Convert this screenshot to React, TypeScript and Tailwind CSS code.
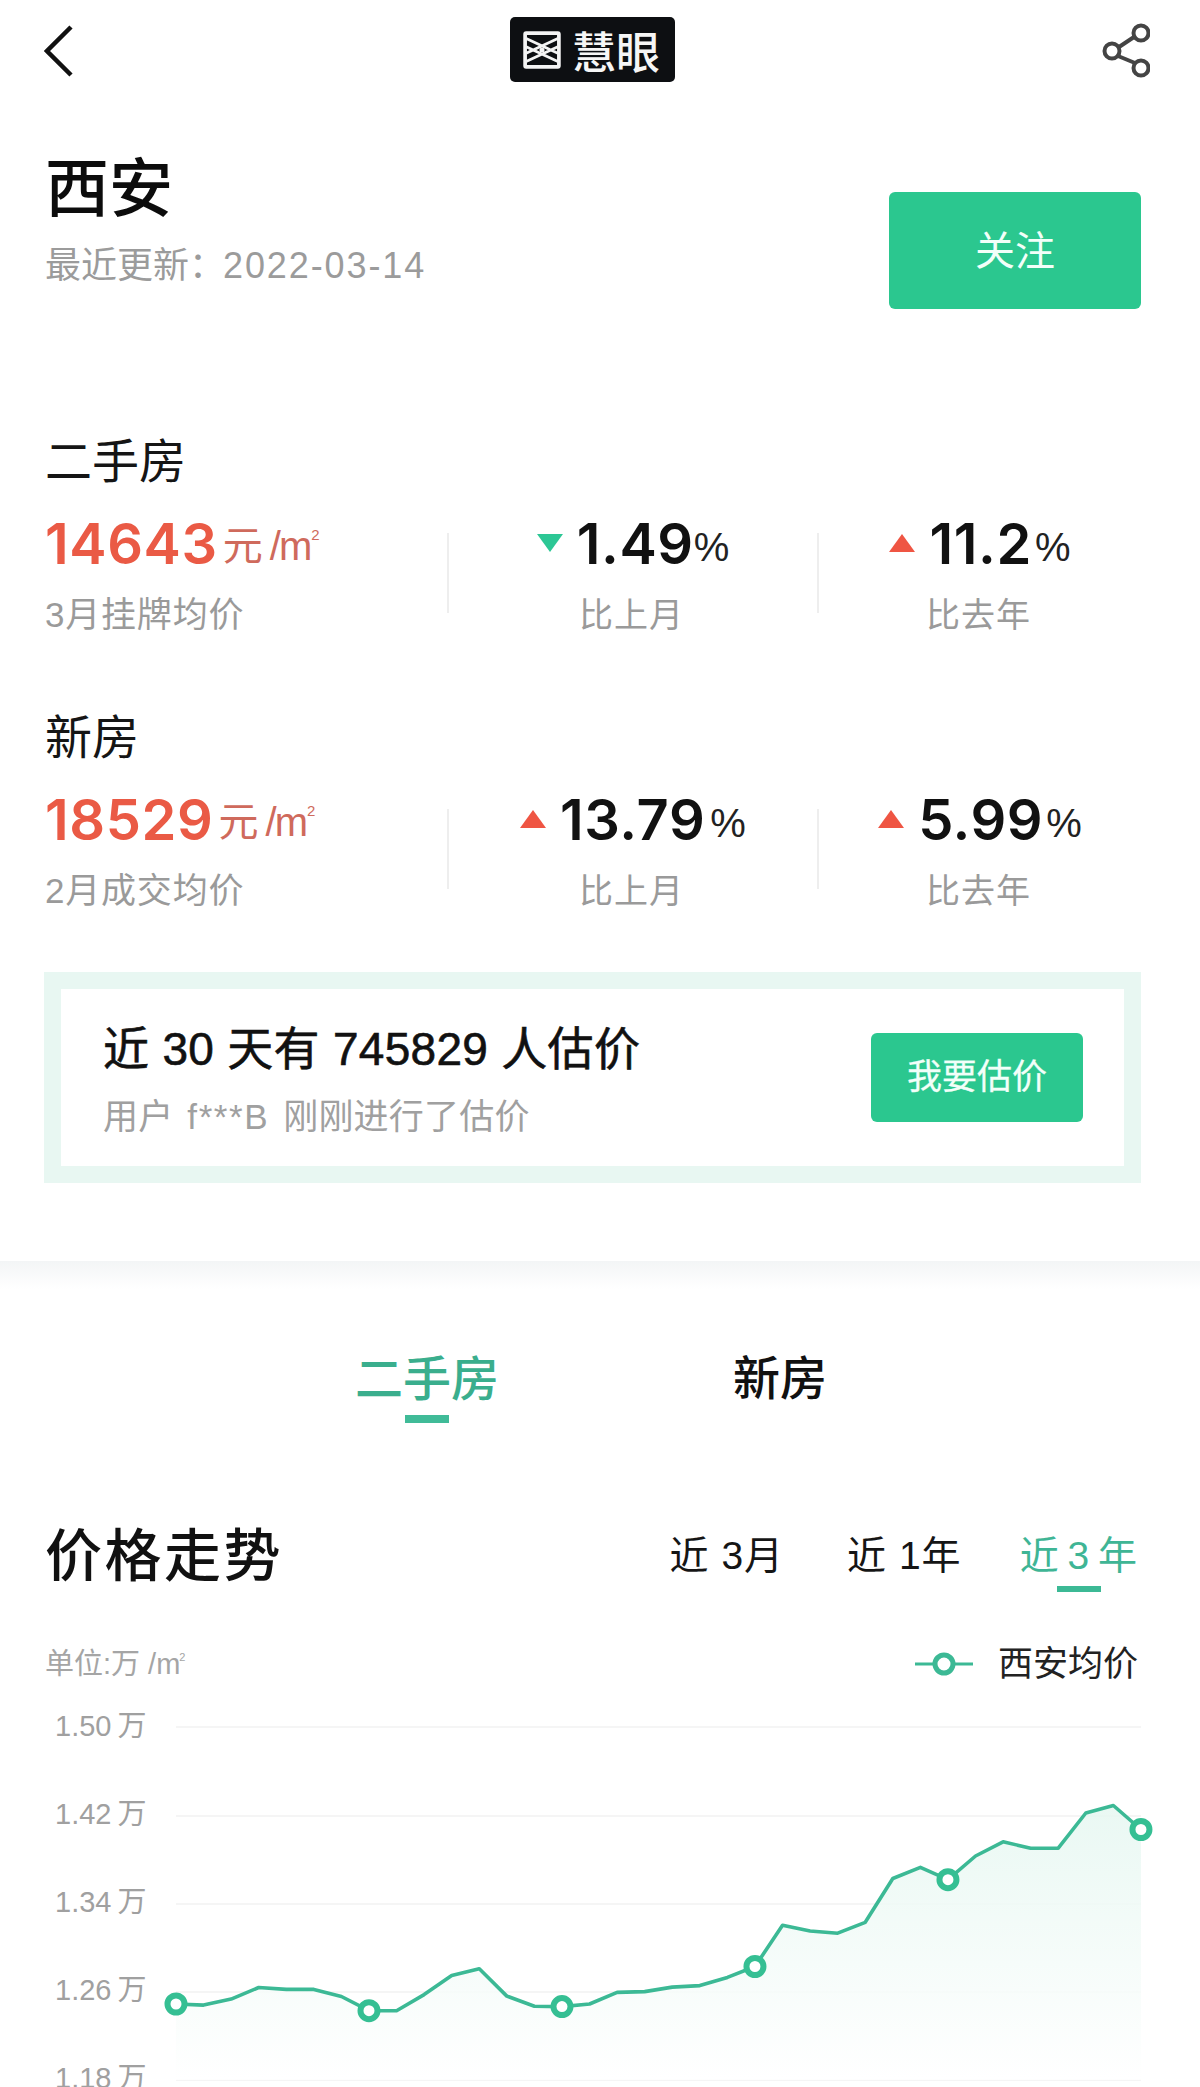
const sans = "font-['Liberation_Sans','Noto_Sans_CJK_SC',sans-serif]";
const cjk = "font-['Noto_Sans_CJK_SC',sans-serif]";
const num = "font-['Inter','Liberation_Sans',sans-serif]";

const trendY = [
  2003, 2004.1, 1998.1, 1986.5, 1988.4, 1988.4, 1995.5, 2009.7, 2009.7, 1993.6, 1974.5, 1967.8,
  1995.1, 2005.2, 2005.6, 2003, 1991.4, 1990.6, 1986.1, 1984.6, 1976.4, 1965.5, 1924.3, 1930,
  1932.2, 1921.3, 1877.5, 1866.3, 1878.7, 1855, 1840.8, 1847.2, 1847.2, 1812, 1804.5, 1828.5,
];
const trendPoints = trendY.map((y, i) => [176 + i * 27.57, y]);
const linePoints = trendPoints.map((p) => p.join(",")).join(" ");
const gridY = [1726, 1815, 1903, 1991, 2079];
const axisLabels = ["1.50", "1.42", "1.34", "1.26", "1.18"];

function Triangle({ up }: { up: boolean }) {
  return (
    <svg width="26" height="18" viewBox="0 0 26 18" className="mt-[20px] shrink-0">
      <polygon
        points={up ? "13,0 26,18 0,18" : "0,0 26,0 13,18"}
        fill={up ? "#ef5543" : "#2cc795"}
      />
    </svg>
  );
}

function Stat({ up, value, label, gap }: { up: boolean; value: string; label: string; gap: string }) {
  return (
    <div className="flex flex-col items-center">
      <div className="flex h-[60px] items-start gap-[14px]">
        <Triangle up={up} />
        <div className={`flex items-baseline ${gap}`}>
          <span className={`${num} text-[56px] leading-[60px] font-semibold text-[#111] tracking-[0.6px]`}>{value}</span>
          <span className={`${sans} -translate-y-[3px] text-[40px] leading-[60px] text-[#222]`}>%</span>
        </div>
      </div>
      <div className={`${sans} mt-[21px] mr-[3px] h-[40px] text-[34px] leading-[40px] text-[#9a9a9a] tracking-[1px]`}>{label}</div>
    </div>
  );
}

function PriceRow({
  title,
  price,
  label,
  month,
  year,
}: {
  title: string;
  price: string;
  label: string;
  month: { up: boolean; value: string; gap: string };
  year: { up: boolean; value: string; gap: string };
}) {
  return (
    <div className="flex flex-col">
      <div className={`${sans} h-[50px] pl-[45px] text-[47px] leading-[50px] text-[#151515]`}>{title}</div>
      <div className="mt-[27px] flex">
        <div className="w-[447px] pl-[45px]">
          <div className="flex h-[60px] items-baseline">
            <span className={`${num} text-[56px] leading-[60px] font-semibold text-[#ea5a45] tracking-[0.6px]`}>{price}</span>
            <span className={`${sans} ml-[5px] inline-block -translate-y-[4px] text-[40px] leading-[60px] tracking-[-2px] text-[#cf6a5c]`}>
              元 /m<span className="ml-[1px] align-[20px] text-[15px] leading-none">2</span>
            </span>
          </div>
          <div className={`${sans} mt-[21px] h-[40px] text-[35px] leading-[40px] tracking-[0.8px] text-[#9a9a9a]`}>{label}</div>
        </div>
        <div className="mt-[19px] h-[80px] w-[2px] bg-[#eeeeee]" />
        <div className="w-[368px]">
          <Stat {...month} label="比上月" />
        </div>
        <div className="mt-[19px] h-[80px] w-[2px] bg-[#eeeeee]" />
        <div className="w-[322px]">
          <Stat {...year} label="比去年" />
        </div>
      </div>
    </div>
  );
}

export default function App() {
  return (
    <div className={`${sans} h-[2087px] w-[1200px] overflow-hidden bg-white`}>
      {/* Top bar */}
      <div className="flex h-[82px] items-start pt-[17px] pl-[44px]">
        <svg width="32" height="52" viewBox="0 0 32 52" fill="none" className="mt-[8px]">
          <polyline points="27,2 3,26 27,50" stroke="#111" strokeWidth="4.5" />
        </svg>
        <div className="ml-[434px] flex h-[65px] w-[165px] items-center rounded-[5px] bg-[#0d0f12] pl-[13px]">
          <svg width="38" height="38" viewBox="0 0 36 36" fill="none" className="shrink-0">
            <rect x="2" y="2" width="32" height="32" rx="1" stroke="#f4f4f4" strokeWidth="3.5" />
            <path d="M3 7 L33 21 M3 15 L33 29 M3 29 L33 15 M3 21 L33 7" stroke="#f4f4f4" strokeWidth="2.6" />
            <circle cx="18" cy="18" r="2.4" fill="#f4f4f4" />
          </svg>
          <span className={`${cjk} ml-[11px] text-[44px] leading-none font-medium text-[#f6f6f6]`}>慧眼</span>
        </div>
        <svg width="50" height="60" viewBox="0 0 50 60" fill="none" className="mt-[3px] ml-[425px]">
          <path d="M19 27 L34 17 M18 36 L35 43" stroke="#444" strokeWidth="4" />
          <circle cx="41" cy="13" r="7.5" stroke="#444" strokeWidth="4" />
          <circle cx="12" cy="31" r="7.5" stroke="#444" strokeWidth="4" />
          <circle cx="41" cy="48" r="7.5" stroke="#444" strokeWidth="4" />
        </svg>
      </div>

      {/* City header */}
      <div className="mt-[66px] flex justify-between pr-[59px] pl-[45px]">
        <div>
          <div className={`${cjk} h-[70px] text-[64px] leading-[70px] font-medium text-[#0c0c0c]`}>西安</div>
          <div className="mt-[28px] h-[40px] text-[36px] leading-[40px] text-[#9b9b9b]">
            最近更新：<span className="-ml-[2px] tracking-[1.9px]">2022-03-14</span>
          </div>
        </div>
        <div className="mt-[44px] flex h-[117px] w-[252px] items-center justify-center rounded-[6px] bg-[#2bc78f] text-[40px] text-[#f2fff9]">
          关注
        </div>
      </div>

      {/* Price rows */}
      <div className="mt-[128px]">
        <PriceRow
          title="二手房"
          price="14643"
          label="3月挂牌均价"
          month={{ up: false, value: "1.49", gap: "gap-[0px]" }}
          year={{ up: true, value: "11.2", gap: "gap-[3px]" }}
        />
        <div className="mt-[78px]">
          <PriceRow
            title="新房"
            price="18529"
            label="2月成交均价"
            month={{ up: true, value: "13.79", gap: "gap-[5px]" }}
            year={{ up: true, value: "5.99", gap: "gap-[3px]" }}
          />
        </div>
      </div>

      {/* Valuation banner */}
      <div className="mt-[61px] ml-[44px] flex h-[211px] w-[1097px] items-center justify-between border-[17px] border-[#e8f7f2] pr-[41px] pl-[42px]">
        <div className="pt-[6px]">
          <div className="h-[50px] text-[46px] leading-[50px] tracking-[0.3px] text-[#111] [-webkit-text-stroke:0.6px_#111]">
            近 30 天有 745829 人估价
          </div>
          <div className="mt-[23px] h-[40px] text-[35px] leading-[40px] tracking-[0.2px] [word-spacing:4px] text-[#a0a0a0]">
            用户 <span className="tracking-[1.6px]">f***B</span> 刚刚进行了估价
          </div>
        </div>
        <div className="flex h-[89px] w-[212px] items-center justify-center rounded-[6px] bg-[#2bc78f] text-[35px] text-[#f2fff9] [-webkit-text-stroke:0.3px_#f2fff9]">
          我要估价
        </div>
      </div>

      {/* Section band */}
      <div className="mt-[78px] h-[28px] bg-gradient-to-b from-[#f3f5f6] to-white" />

      {/* Listing type tabs */}
      <div className="mt-[61px] flex pl-[355px]">
        <div className="flex w-[144px] flex-col items-center">
          <div className={`${cjk} h-[50px] text-[48px] leading-[50px] font-medium text-[#3aae8d]`}>二手房</div>
          <div className="mt-[15px] h-[8px] w-[44px] bg-[#40bb98]" />
        </div>
        <div className={`${cjk} ml-[234px] h-[50px] text-[47px] leading-[50px] font-medium text-[#111]`}>新房</div>
      </div>

      {/* Trend heading */}
      <div className="mt-[96px] flex items-start pl-[45px]">
        <div className={`${cjk} h-[64px] text-[57px] leading-[64px] font-medium tracking-[2.5px] text-[#111]`}>价格走势</div>
        <div className="mt-[12px] ml-auto flex pr-[62px] text-[39px] leading-[50px] tracking-[1px]">
          <div className="text-[#151515]">近 3月</div>
          <div className="ml-[63px] text-[#151515]">近 1年</div>
          <div className="ml-[58px] flex flex-col items-center text-[#3fb595] [word-spacing:-4px]">
            <div>近 3 年</div>
            <div className="mt-[5px] h-[6px] w-[44px] bg-[#3cb995]" />
          </div>
        </div>
      </div>

      {/* Unit and legend */}
      <div className="mt-[53px] flex h-[38px] items-center justify-between pr-[62px] pl-[45px]">
        <div className="text-[29px] leading-[38px] text-[#a5a5a5]">
          单位:万 /m<span className="-ml-[1px] align-[13px] text-[11px] leading-none">2</span>
        </div>
        <div className="flex items-center">
          <svg width="58" height="26" viewBox="0 0 58 26" fill="none">
            <line x1="0" y1="13" x2="58" y2="13" stroke="#3cb995" strokeWidth="3" />
            <circle cx="29" cy="13" r="9" fill="white" stroke="#3cb995" strokeWidth="5" />
          </svg>
          <span className="ml-[25px] text-[35px] leading-[38px] text-[#222]">西安均价</span>
        </div>
      </div>

      {/* Chart */}
      <div className="flex">
        <div className="flex w-[176px] flex-col pl-[55px]">
          {axisLabels.map((label, i) => (
            <div key={i} className="flex h-[88px] shrink-0 items-center text-[29px] [word-spacing:-2px] text-[#a0a0a0]">
              {label} 万
            </div>
          ))}
        </div>
        <svg width="965" height="405" viewBox="176 1682 965 405" fill="none" className="shrink-0 overflow-visible">
          <defs>
            <linearGradient id="trendFill" x1="0" y1="0" x2="0" y2="1">
              <stop offset="0" stopColor="#e6f7f1" />
              <stop offset="1" stopColor="#ffffff" />
            </linearGradient>
          </defs>
          {gridY.map((y) => (
            <line key={y} x1="176" x2="1141" y1={y} y2={y} stroke="#ececec" strokeWidth="1.2" />
          ))}
          <polygon points={`176,2079 ${linePoints} 1141,2079`} fill="url(#trendFill)" fillOpacity="0.85" />
          <polyline points={linePoints} stroke="#3cb995" strokeWidth="3.6" strokeLinejoin="round" />
          {trendPoints
            .filter((_, i) => i % 7 === 0)
            .map(([x, y]) => (
              <circle key={x} cx={x} cy={y} r="8.5" fill="white" stroke="#35bf93" strokeWidth="6" />
            ))}
        </svg>
      </div>
    </div>
  );
}
